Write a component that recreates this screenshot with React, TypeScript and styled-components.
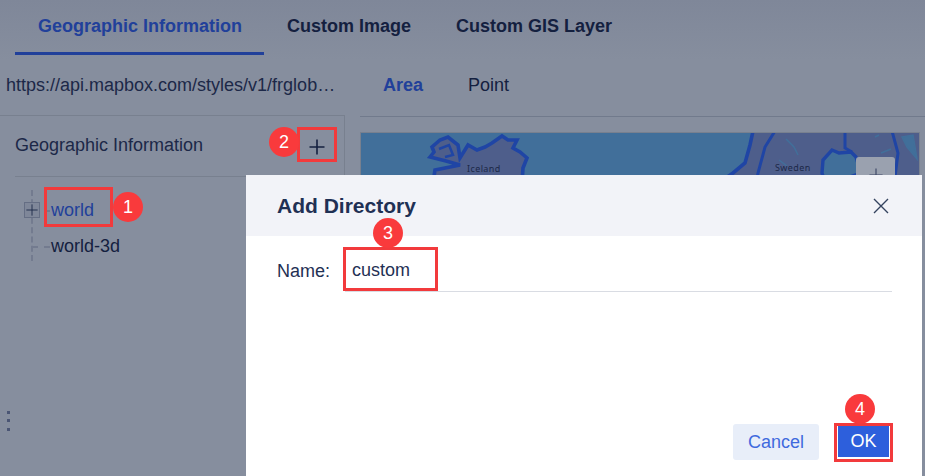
import React from "react";
import styled, { createGlobalStyle } from "styled-components";

const GlobalStyle = createGlobalStyle`
  html, body {
    margin: 0;
    padding: 0;
    background: #868e9e;
  }
  * {
    box-sizing: border-box;
  }
`;

const Page = styled.div`
  position: relative;
  width: 925px;
  height: 476px;
  overflow: hidden;
  background: linear-gradient(180deg, #7f8799 0%, #868e9e 60px);
  font-family: "Liberation Sans", Arial, sans-serif;
  color: #1c2848;
`;

const TabBar = styled.div`
  display: flex;
  height: 55px;
  padding-left: 15px;
`;

const Tab = styled.div<{ $active?: boolean }>`
  display: flex;
  align-items: flex-start;
  height: 55px;
  padding: 16px 22px 0 23px;
  font-size: 18px;
  line-height: 20px;
  font-weight: 700;
  color: ${(p) => (p.$active ? "#21409a" : "#14203f")};
  border-bottom: 3px solid ${(p) => (p.$active ? "#21409a" : "transparent")};
`;

const Body = styled.div`
  display: grid;
  grid-template-columns: 345px 1fr;
`;

const LeftColumn = styled.div`
  display: flex;
  flex-direction: column;
`;

const UrlRow = styled.div`
  height: 60px;
  padding: 20px 0 0 6px;
  font-size: 18px;
  line-height: 20px;
  color: #1c2848;
  white-space: nowrap;
`;

const TreePanel = styled.div`
  height: 361px;
  padding: 0 14px 0 15px;
  border-top: 1px solid #78808f;
  border-right: 1px solid #78808f;
`;

const PanelHeader = styled.div`
  display: flex;
  align-items: center;
  justify-content: space-between;
  height: 61px;
  padding-bottom: 2px;
  border-bottom: 1px solid #78808f;
  font-size: 18px;
`;

const AddButton = styled.div`
  display: flex;
  margin-right: 5px;
  margin-top: 4px;
`;

const Tree = styled.div`
  position: relative;
  display: flex;
  flex-direction: column;
  gap: 16px;
  padding: 23px 0 0 36px;
  font-size: 18px;
  line-height: 20px;
`;

const TreeLine = styled.div`
  position: absolute;
  left: 16px;
  top: 13px;
  height: 71px;
  border-left: 2px dashed #737b8f;
`;

const TreeNode = styled.div<{ $active?: boolean }>`
  position: relative;
  color: ${(p) => (p.$active ? "#21409a" : "#14203f")};
  &::before {
    content: "";
    position: absolute;
    left: -19px;
    top: 10px;
    width: 18px;
    border-top: 2px dashed #737b8f;
  }
`;

const Expander = styled.div`
  position: absolute;
  left: -27px;
  top: 2px;
  width: 16px;
  height: 16px;
  display: flex;
  align-items: center;
  justify-content: center;
  border: 1px solid #656e84;
  background: #7f8799;
  z-index: 1;
`;

const RightColumn = styled.div`
  display: flex;
  flex-direction: column;
  padding-left: 15px;
`;

const SubTabs = styled.div`
  display: flex;
  gap: 45px;
  height: 62px;
  padding: 20px 0 0 23px;
  border-bottom: 1px solid #717a8c;
  font-size: 18px;
  line-height: 20px;
`;

const SubTab = styled.div<{ $active?: boolean }>`
  font-weight: ${(p) => (p.$active ? 700 : 400)};
  color: ${(p) => (p.$active ? "#21409a" : "#14203f")};
`;

const MapFrame = styled.div`
  position: relative;
  width: 560px;
  height: 330px;
  margin-top: 15px;
  background: #416f9a;
  border: 1px solid #78808f;
  overflow: hidden;
  svg {
    display: block;
  }
`;

const MapLabel = styled.text`
  font-family: "Noto Sans", sans-serif;
  font-size: 9px;
  letter-spacing: 0.4px;
  fill: #1c2848;
`;

const ZoomControl = styled.div`
  position: absolute;
  left: 495px;
  top: 24px;
  width: 39px;
  height: 60px;
  display: flex;
  justify-content: center;
  padding-top: 11px;
  border-radius: 3px;
  background: #9aa1af;
`;

const Handle = styled.div`
  position: absolute;
  left: 7px;
  top: 411px;
  display: flex;
  flex-direction: column;
  gap: 5.4px;
  i {
    display: block;
    width: 3px;
    height: 3px;
    background: #4a5574;
  }
`;

const Modal = styled.div`
  position: absolute;
  left: 246px;
  top: 175px;
  width: 676px;
  height: 320px;
  display: flex;
  flex-direction: column;
  background: #fff;
  border-radius: 4px 4px 0 0;
  color: #1f3054;
`;

const ModalHeader = styled.div`
  display: flex;
  align-items: center;
  justify-content: space-between;
  height: 61px;
  padding: 0 33px 0 31px;
  background: #f2f3f8;
  font-size: 21px;
  font-weight: 700;
`;

const CloseButton = styled.div`
  display: flex;
`;

const ModalBody = styled.div`
  display: flex;
  flex-direction: column;
  flex: 1;
  padding: 14px 30px 0 31px;
`;

const Field = styled.div`
  display: flex;
  align-items: center;
  height: 42px;
  font-size: 18px;
`;

const FieldLabel = styled.div`
  width: 68px;
  flex: none;
`;

const FieldInput = styled.div`
  flex: 1;
  height: 42px;
  padding: 0 0 0 7px;
  line-height: 41px;
  border-bottom: 1px solid #d9dce3;
`;

const Footer = styled.div`
  display: flex;
  justify-content: flex-end;
  gap: 19px;
  margin-top: 132px;
  margin-right: 3px;
`;

const Button = styled.div<{ $primary?: boolean }>`
  display: flex;
  align-items: center;
  justify-content: center;
  height: ${(p) => (p.$primary ? "31px" : "36px")};
  width: ${(p) => (p.$primary ? "51px" : "86px")};
  margin-top: ${(p) => (p.$primary ? "2px" : "0")};
  border-radius: ${(p) => (p.$primary ? "0" : "3px")};
  background: ${(p) => (p.$primary ? "#2d5fdc" : "#e8eef9")};
  color: ${(p) => (p.$primary ? "#fff" : "#3f6ade")};
  font-size: 18px;
`;

const Highlight = styled.div<{ $x: number; $y: number; $w: number; $h: number }>`
  position: absolute;
  left: ${(p) => p.$x}px;
  top: ${(p) => p.$y}px;
  width: ${(p) => p.$w}px;
  height: ${(p) => p.$h}px;
  border: 3px solid #f23a3c;
`;

const Step = styled.div<{ $x: number; $y: number }>`
  position: absolute;
  left: ${(p) => p.$x}px;
  top: ${(p) => p.$y}px;
  width: 30px;
  height: 30px;
  display: flex;
  align-items: center;
  justify-content: center;
  border-radius: 50%;
  background: #f93a3c;
  color: #fff;
  font-size: 18px;
`;

const PlusIcon = ({ size, color, width = 1.6 }: { size: number; color: string; width?: number }) => (
  <svg width={size} height={size} viewBox="0 0 16 16" fill="none" stroke={color} strokeWidth={width}>
    <path d="M8 0.5V15.5M0.5 8H15.5" />
  </svg>
);

const WorldMap = () => (
  <svg width="558" height="328" viewBox="0 0 558 328">
    {/* Iceland */}
    <path
      d="M69 24 L73 19 L71 14 L79 7 L87 4 L97 12 L99 25 L107 12 L116 17 L124 14 L131 10 L141 3 L147 7 L156 7 L152 15 L159 19 L166 25 L162 35 L161 50 L72 50 L74 37 L99 32 L85 28 Z"
      fill="#4e5e8b"
      stroke="#1f45a5"
      strokeWidth="3.6"
    />
    <path d="M78 16 L88 12 L92 22 L84 24" fill="none" stroke="#1f45a5" strokeWidth="2.5" />
    <MapLabel x="106" y="39">Iceland</MapLabel>
    {/* Scandinavia */}
    <path d="M392 -2 L389 12 L384 30 L372 40 L355 52 L355 340 L558 340 L558 -2 Z" fill="#4e5e8b" />
    <path d="M392 -2 L389 12 L384 30 L372 40 L355 52" fill="none" stroke="#1f45a5" strokeWidth="3.6" />
    <path d="M414 -2 L404 14 L397 40 L395 52" fill="none" stroke="#1f45a5" strokeWidth="3" />
    <path d="M484 -2 L484 15 L491 19 M531 -2 L537 20 L534 44" fill="none" stroke="#1f45a5" strokeWidth="3" />
    <path
      d="M471 17 L478 20 L490 19 L495 24 L500 40 L465 52 L461 40 L462 27 Z"
      fill="#416f9a"
      stroke="#1f45a5"
      strokeWidth="3.4"
    />
    <path d="M425 6 L433 14 L437 22 M418 27 L426 33" fill="none" stroke="#416f9a" strokeWidth="1.5" />
    <path d="M541 4 L552 2 L556 26 L546 14 Z M520 20 L530 16 M514 4 L518 2" fill="#416f9a" stroke="#416f9a" strokeWidth="1.5" />
    <MapLabel x="414" y="38">Sweden</MapLabel>
  </svg>
);

const App = () => {
  return (
    <Page>
      <GlobalStyle />
      <TabBar>
        <Tab $active>Geographic Information</Tab>
        <Tab>Custom Image</Tab>
        <Tab>Custom GIS Layer</Tab>
      </TabBar>
      <Body>
        <LeftColumn>
          <UrlRow>https://api.mapbox.com/styles/v1/frglob…</UrlRow>
          <TreePanel>
            <PanelHeader>
              Geographic Information
              <AddButton>
                <PlusIcon size={16} color="#14203f" />
              </AddButton>
            </PanelHeader>
            <Tree>
              <TreeLine />
              <TreeNode $active>
                <Expander>
                  <PlusIcon size={12} color="#1c2848" width={1.2} />
                </Expander>
                world
              </TreeNode>
              <TreeNode>world-3d</TreeNode>
            </Tree>
          </TreePanel>
        </LeftColumn>
        <RightColumn>
          <SubTabs>
            <SubTab $active>Area</SubTab>
            <SubTab>Point</SubTab>
          </SubTabs>
          <MapFrame>
            <WorldMap />
            <ZoomControl>
              <PlusIcon size={14} color="#3c4766" width={1.3} />
            </ZoomControl>
          </MapFrame>
        </RightColumn>
      </Body>
      <Handle>
        <i />
        <i />
        <i />
      </Handle>
      <Modal>
        <ModalHeader>
          Add Directory
          <CloseButton>
            <svg width="16" height="16" viewBox="0 0 16 16" fill="none" stroke="#34435f" strokeWidth="1.4">
              <path d="M1 1L15 15M15 1L1 15" />
            </svg>
          </CloseButton>
        </ModalHeader>
        <ModalBody>
          <Field>
            <FieldLabel>Name:</FieldLabel>
            <FieldInput>custom</FieldInput>
          </Field>
          <Footer>
            <Button>Cancel</Button>
            <Button $primary>OK</Button>
          </Footer>
        </ModalBody>
      </Modal>
      <Highlight $x={44} $y={187} $w={69} $h={40} />
      <Highlight $x={297} $y={127} $w={40} $h={35} />
      <Highlight $x={343} $y={247} $w={95} $h={44} />
      <Highlight $x={834} $y={423} $w={59} $h={39} />
      <Step $x={113} $y={192}>1</Step>
      <Step $x={269} $y={127}>2</Step>
      <Step $x={373} $y={218}>3</Step>
      <Step $x={845} $y={394}>4</Step>
    </Page>
  );
};

export default App;
